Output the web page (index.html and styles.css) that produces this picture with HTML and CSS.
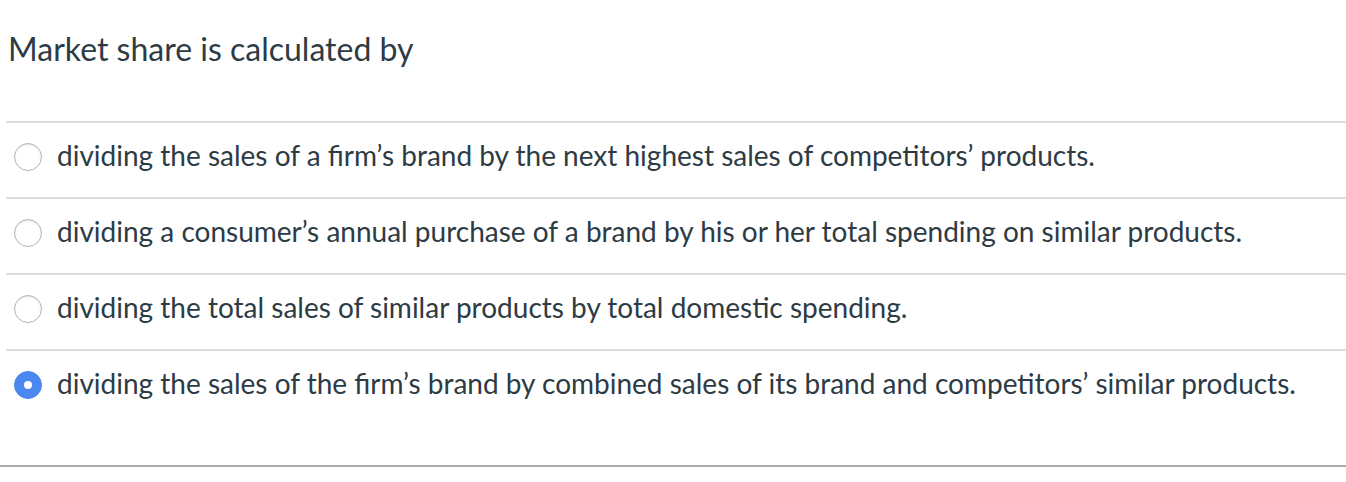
FILE: index.html
```html
<!DOCTYPE html>
<html>
<head>
<meta charset="utf-8">
<link rel="stylesheet" href="styles.css">
</head>
<body>
<div class="question">
  <div class="question-text">Market share is calculated by</div>
  <div class="answers">
    <div class="answer"><span class="radio"></span><span class="label">dividing the sales of a firm’s brand by the next highest sales of competitors’ products.</span></div>
    <div class="answer"><span class="radio"></span><span class="label">dividing a consumer’s annual purchase of a brand by his or her total spending on similar products.</span></div>
    <div class="answer"><span class="radio"></span><span class="label">dividing the total sales of similar products by total domestic spending.</span></div>
    <div class="answer last"><span class="radio checked"></span><span class="label">dividing the sales of the firm’s brand by combined sales of its brand and competitors’ similar products.</span></div>
  </div>
</div>
<div class="footer-line"></div>
</body>
</html>
```
FILE: styles.css
```css
html, body {
  margin: 0;
  padding: 0;
  background: #fff;
}
body {
  font-family: Lato, "Open Sans", sans-serif;
  color: #2d3b45;
}
.question {
  padding-left: 6px;
}
.question-text {
  font-size: 32px;
  line-height: 36px;
  padding: 31px 0 0 2px;
  height: 121px;
  box-sizing: border-box;
}
.answer {
  display: flex;
  align-items: flex-start;
  height: 76px;
  padding-top: 20px;
  border-top: 2px solid #dcdcdc;
  box-sizing: border-box;
}
.answer.last {
  height: 116px;
}
.radio {
  width: 28px;
  height: 28px;
  border: 1px solid #b4b4b4;
  border-radius: 50%;
  box-sizing: border-box;
  margin-left: 8px;
  margin-right: 15px;
  flex: none;
  background: #fff;
  box-shadow: inset 0 1px 2px rgba(0,0,0,0.10);
}
.radio.checked {
  background: #4a87ee;
  border-color: #4a87ee;
  box-shadow: none;
  position: relative;
}
.radio.checked::after {
  content: "";
  position: absolute;
  left: 9px;
  top: 9px;
  width: 8px;
  height: 8px;
  border-radius: 50%;
  background: #fff;
}
.label {
  font-size: 28px;
  line-height: 22px;
  padding-top: 1px;
}
.footer-line {
  height: 2px;
  background: #ababab;
}
```
